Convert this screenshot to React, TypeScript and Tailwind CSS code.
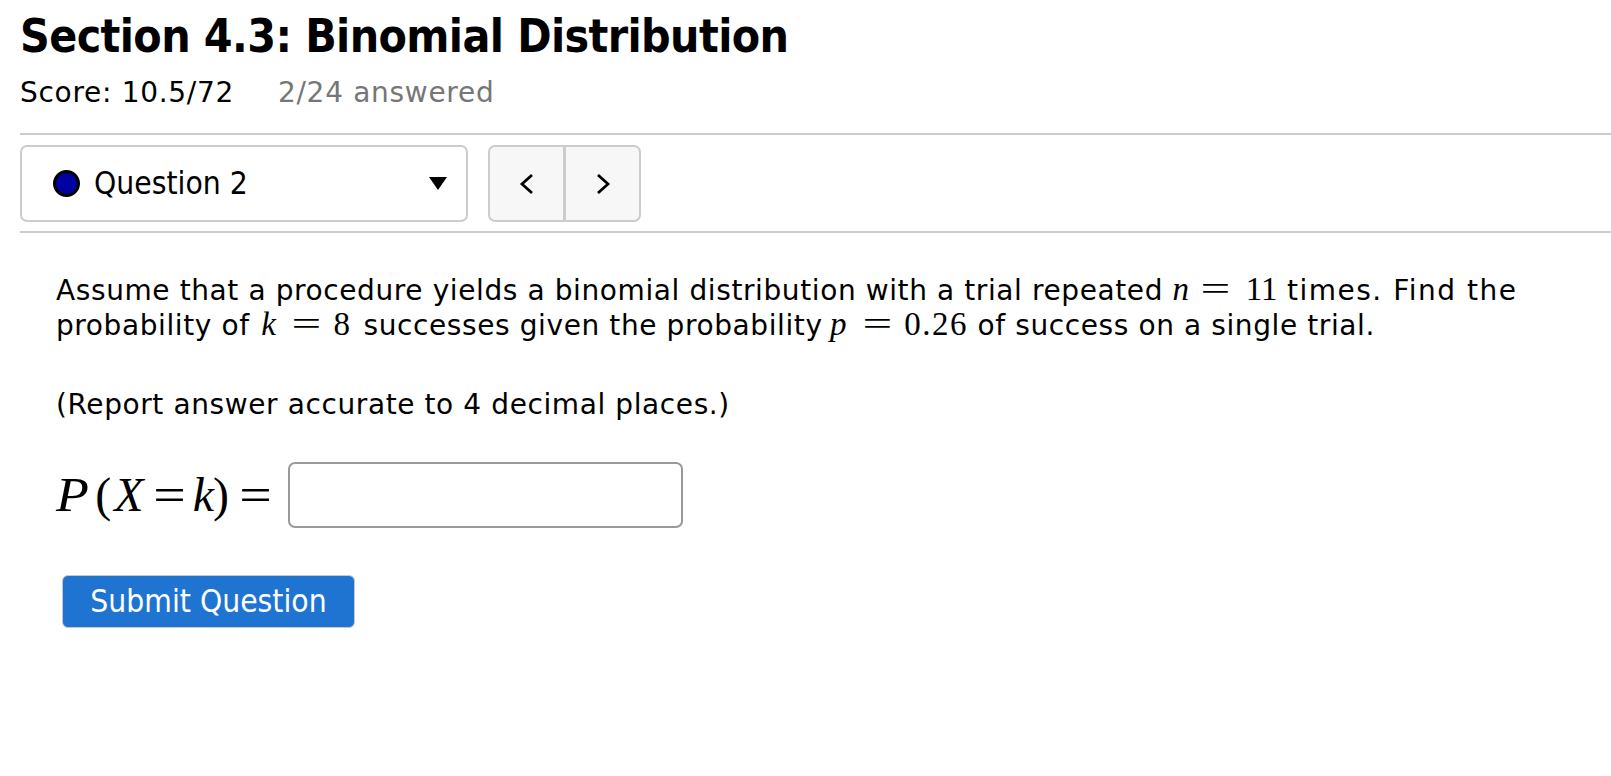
import React from "react";

function Eq({ className = "" }: { className?: string }) {
  return (
    <span className={"inline-block scale-x-[1.6] " + className}>=</span>
  );
}

export default function App() {
  return (
    <div className="min-h-screen w-full bg-white pl-[20px] text-black font-['DejaVu_Sans_Condensed','DejaVu_Sans',sans-serif]">
      <h1 className="mt-[13px] text-[46px] leading-[46px] font-bold tracking-[-0.6px]">
        Section 4.3: Binomial Distribution
      </h1>
      <div className="mt-[20px] flex gap-[44px] font-['DejaVu_Sans',sans-serif] text-[28px] leading-[28px] tracking-[0.7px]">
        <span>Score: 10.5/72</span>
        <span className="text-[#767676]">2/24 answered</span>
      </div>
      <div className="mt-[26px] border-t-2 border-[#cccccc]" />
      <div className="mt-[10px] mb-[9px] flex gap-[20px]">
        <div className="flex h-[77px] w-[448px] items-center rounded-[7px] border-2 border-[#cccccc] pl-[31px] pr-[19px]">
          <span className="h-[27px] w-[27px] rounded-full border-[3px] border-black bg-[#0000a3]" />
          <span className="ml-[14px] text-[31.5px] leading-none">Question 2</span>
          <svg className="ml-auto" width="18" height="13" viewBox="0 0 18 13">
            <polygon points="0,0 18,0 9,13" fill="#000" />
          </svg>
        </div>
        <div className="flex h-[77px] w-[153px] overflow-hidden rounded-[7px] border-2 border-[#cccccc] bg-[#f7f7f7]">
          <button className="flex flex-1 items-center justify-center">
            <svg width="16" height="22" viewBox="0 0 16 22">
              <polyline points="13,2 3,11 13,20" fill="none" stroke="#000" strokeWidth="2.8" />
            </svg>
          </button>
          <div className="w-[3px] bg-[#cccccc]" />
          <button className="flex flex-1 items-center justify-center">
            <svg width="16" height="22" viewBox="0 0 16 22">
              <polyline points="3,2 13,11 3,20" fill="none" stroke="#000" strokeWidth="2.8" />
            </svg>
          </button>
        </div>
      </div>
      <div className="border-t-2 border-[#cccccc]" />
      <div className="pl-[36px] font-['DejaVu_Sans',sans-serif] text-[28px] leading-[35px] tracking-[0.6px]">
        <p className="mt-[40px]">
          Assume that a procedure yields a binomial distribution with a trial repeated{" "}
          <span className="font-['Liberation_Serif',serif] text-[33px] leading-[0] tracking-normal">
            <i>n</i>
            <Eq className="ml-[17px] mr-[21px]" />
            11
          </span>{" "}
          <span className="tracking-[1.5px]">times. Find the</span>
          <br />
          probability of{" "}
          <span className="ml-[2px] mr-[4px] font-['Liberation_Serif',serif] text-[33px] leading-[0] tracking-normal">
            <i>k</i>
            <Eq className="ml-[21px] mr-[18px]" />8
          </span>{" "}
          successes given the probability{" "}
          <span className="ml-[-2px] font-['Liberation_Serif',serif] text-[33px] leading-[0] tracking-normal">
            <i>p</i>
            <Eq className="ml-[21px] mr-[18px]" />
            <span className="tracking-[1.5px]">0.26</span>
          </span>{" "}
          of success on a single trial.
        </p>
        <p className="mt-[44px]">(Report answer accurate to 4 decimal places.)</p>
        <div className="mt-[40px] flex items-center">
          <span className="flex items-baseline font-['Liberation_Serif',serif] text-[48px] leading-none tracking-normal">
            <i className="inline-block origin-left scale-x-[1.12]">P</i>
            <span className="ml-[10px]">(</span>
            <i className="ml-[3px]">X</i>
            <span className="ml-[12px] inline-block scale-x-[1.2]">=</span>
            <i className="ml-[10px]">k</i>
            <span className="ml-[-1px]">)</span>
            <span className="ml-[13px] inline-block scale-x-[1.2]">=</span>
          </span>
          <input
            type="text"
            className="ml-[19px] h-[66px] w-[395px] rounded-[7px] border-2 border-[#999999] bg-white outline-none"
          />
        </div>
        <button className="mt-[47px] ml-[6px] flex h-[53px] w-[293px] items-center justify-center rounded-[6px] border border-[#c8c8c8] bg-[#1f74d2] font-['DejaVu_Sans_Condensed','DejaVu_Sans',sans-serif] text-[31.5px] leading-none tracking-normal text-white">
          Submit Question
        </button>
      </div>
    </div>
  );
}
